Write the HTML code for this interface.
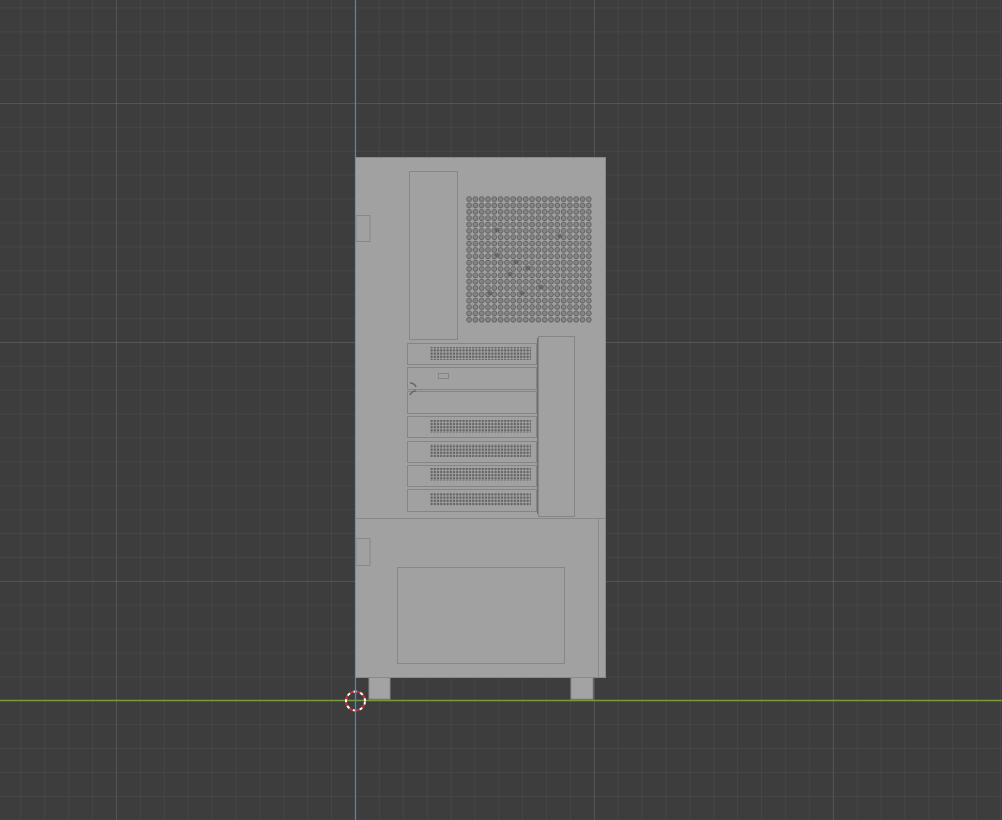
<!DOCTYPE html>
<html><head><meta charset="utf-8"><style>
html,body{margin:0;padding:0;}
body{width:1002px;height:820px;overflow:hidden;position:relative;background:#3d3d3d;
background-image:
linear-gradient(to right, rgba(255,255,255,0.08) 1px, transparent 1px),
linear-gradient(to bottom, rgba(255,255,255,0.08) 1px, transparent 1px),
linear-gradient(to right, rgba(255,255,255,0.045) 1px, transparent 1px),
linear-gradient(to bottom, rgba(255,255,255,0.045) 1px, transparent 1px);
background-size:239px 239px,239px 239px,23.9px 23.9px,23.9px 23.9px;
background-position:116px 0,0 103px,116px 0,0 103px;}
</style></head><body>
<svg width="1002" height="820" style="position:absolute;left:0;top:0" xmlns="http://www.w3.org/2000/svg">
<defs>
<pattern id="holes" x="466" y="196" width="6.3" height="6.35" patternUnits="userSpaceOnUse">
<circle cx="3.1" cy="3.1" r="2.4" fill="#858585" stroke="#5e5e5e" stroke-width="0.9"/>
</pattern>
<pattern id="perf" x="430" y="0" width="3.2" height="3.2" patternUnits="userSpaceOnUse">
<circle cx="1.6" cy="1.6" r="1.2" fill="#666"/>
</pattern>
</defs>
<line x1="355.5" y1="0" x2="355.5" y2="820" stroke="#3a8fd0" stroke-width="1.2"/>
<line x1="0" y1="700.5" x2="1002" y2="700.5" stroke="#7a9a3a" stroke-width="1.5"/>
<rect x="369" y="677" width="21" height="22" fill="#a3a3a3" stroke="#888"/>
<rect x="571" y="677" width="22" height="22" fill="#a3a3a3" stroke="#888"/>
<rect x="355.5" y="157.5" width="250" height="520" fill="#a1a1a1" stroke="#8a8a8a"/>
<line x1="356" y1="518.5" x2="605" y2="518.5" stroke="#888"/>
<line x1="598.5" y1="519" x2="598.5" y2="677" stroke="#8c8c8c"/>
<rect x="356" y="215.5" width="14" height="26" fill="none" stroke="#888"/>
<rect x="356" y="538.5" width="14" height="27" fill="none" stroke="#888"/>
<rect x="409.5" y="171.5" width="48" height="168" fill="none" stroke="#878787"/>
<rect x="466" y="196" width="126" height="127" fill="url(#holes)"/>
<g fill="#555" opacity="0.6">
<circle cx="497" cy="230" r="2.5"/><circle cx="516" cy="262" r="2.5"/><circle cx="490" cy="293" r="2.5"/>
<circle cx="522" cy="293" r="2.5"/><circle cx="528" cy="268" r="2.5"/><circle cx="497" cy="255" r="2.5"/>
<circle cx="560" cy="236" r="2.5"/><circle cx="541" cy="287" r="2.5"/><circle cx="510" cy="274" r="2.5"/>
</g>
<rect x="397.5" y="567.5" width="167" height="96" fill="none" stroke="#878787"/>
<g fill="none" stroke="#858585">
<rect x="407.5" y="343.5" width="129" height="21"/>
<rect x="407.5" y="367.5" width="129" height="22"/>
<rect x="407.5" y="391.5" width="129" height="22"/>
<rect x="407.5" y="416.5" width="129" height="21"/>
<rect x="407.5" y="441.5" width="129" height="21"/>
<rect x="407.5" y="465.5" width="129" height="21"/>
<rect x="407.5" y="489.5" width="129" height="22"/>
<rect x="538.5" y="336.5" width="36" height="180"/>
<line x1="537.5" y1="338" x2="537.5" y2="514" stroke="#707070"/>
<rect x="438.5" y="373.5" width="10" height="5"/>
</g>
<path d="M410 383 a6 6 0 0 1 6 4" stroke="#666" fill="none" stroke-width="1.5"/>
<path d="M410 395 a6 6 0 0 1 6 -4" stroke="#666" fill="none" stroke-width="1.5"/>
<g fill="url(#perf)">
<rect x="430" y="347" width="101" height="13"/>
<rect x="430" y="420" width="101" height="13"/>
<rect x="430" y="444" width="101" height="13"/>
<rect x="430" y="468" width="101" height="13"/>
<rect x="430" y="493" width="101" height="13"/>
</g>
<circle cx="355.5" cy="701" r="9.5" fill="none" stroke="#fff" stroke-width="2" stroke-dasharray="4 3"/>
<circle cx="355.5" cy="701" r="9.5" fill="none" stroke="#c0303a" stroke-width="2" stroke-dasharray="4 3" stroke-dashoffset="3.5"/>
<line x1="355.5" y1="690" x2="355.5" y2="712" stroke="#3a8fd0" stroke-width="1.2"/>
</svg>
</body></html>
